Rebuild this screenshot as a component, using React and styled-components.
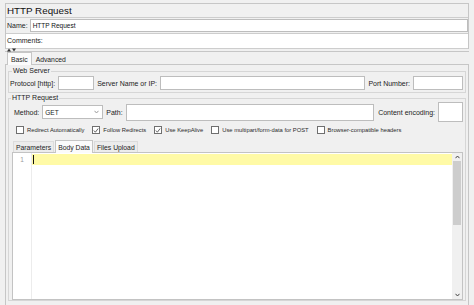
import React from "react";
import styled, { createGlobalStyle } from "styled-components";

const GlobalStyle = createGlobalStyle`
  html, body {
    margin: 0;
    padding: 0;
    background: #f0f0f0;
  }
  * {
    box-sizing: border-box;
  }
`;

const Page = styled.div`
  width: 474px;
  height: 305px;
  overflow: hidden;
  background: #f0f0f0;
  padding: 3px 5px 0 5px;
  font-family: "Liberation Sans", Arial, sans-serif;
  color: #1c1c1c;
`;

const TopPanel = styled.div`
  border: 1px solid #c6c6c6;
  border-bottom: none;
`;

const Title = styled.div`
  height: 14px;
  line-height: 13px;
  font-size: 9.8px;
  padding-left: 1px;
  color: #111;
  border-bottom: 1px solid #cdcdcd;
`;

const FieldRow = styled.div`
  display: flex;
  align-items: center;
  height: ${(p) => p.h || 15}px;
  gap: ${(p) => p.gap || 3}px;
`;

const Label = styled.span`
  font-size: ${(p) => p.size || 7}px;
  white-space: nowrap;
  padding-left: ${(p) => p.pl || 0}px;
`;

const TextInput = styled.div`
  height: ${(p) => p.h || 14}px;
  width: ${(p) => (p.w ? p.w + "px" : "auto")};
  flex: ${(p) => (p.w ? "none" : 1)};
  background: #fff;
  border: 1px solid #bdbdbd;
  font-size: 6.5px;
  line-height: ${(p) => (p.h || 14) - 2}px;
  padding-left: 2px;
  color: #111;
`;

const Comments = styled.div`
  height: 16px;
  background: #fff;
  border-top: 1px solid #cdcdcd;
  border-bottom: 1px solid #cdcdcd;
  font-size: 7px;
  line-height: 14px;
  padding-left: 1px;
`;

const Divider = styled.div`
  height: 4px;
  border-bottom: 1px solid #c6c6c6;
  display: flex;
  align-items: flex-start;
  gap: 1px;
  padding-left: 2px;
  margin-top: -1px;
`;

const TabStrip = styled.div`
  display: flex;
  align-items: flex-end;
  height: ${(p) => p.h || 13}px;
  padding-left: ${(p) => p.pl || 2}px;
  margin-top: ${(p) => p.mt || 0}px;
`;

const Tab = styled.div`
  font-size: 6.8px;
  padding: 0 ${(p) => p.px || 3}px;
  height: ${(p) => (p.active ? p.h + 2 : p.h)}px;
  line-height: ${(p) => (p.active ? p.h + 2 : p.h)}px;
  background: ${(p) => (p.active ? "#fbfbfb" : p.flat ? "transparent" : "#ececec")};
  border: 1px solid ${(p) => (p.active ? "#c6c6c6" : p.flat ? "transparent" : "#dcdcdc")};
  border-bottom: none;
  margin-right: 1px;
  margin-bottom: ${(p) => (p.active ? -1 : 0)}px;
  position: relative;
  white-space: nowrap;
`;

const TabPanel = styled.div`
  border: 1px solid #c6c6c6;
  height: 260px;
  padding: 2px 2px 0 2px;
`;

const Group = styled.fieldset`
  margin: ${(p) => p.mt || 0}px 0 0 0;
  padding: ${(p) => p.pad || "1px 2px 2px 1px"};
  min-width: 0;
  border: 1px solid #d6d6d6;
`;

const Legend = styled.legend`
  font-size: 7px;
  line-height: 8px;
  padding: 0 1px;
  margin-left: 2px;
  color: #1c1c1c;
`;

const MethodRow = styled(FieldRow)`
  padding: 0 2px 0 5px;
`;

const Select = styled.div`
  width: 61px;
  height: 14px;
  background: #fff;
  border: 1px solid #bdbdbd;
  display: flex;
  align-items: center;
  justify-content: space-between;
  padding: 0 3px 0 2px;
  font-size: 6.5px;
`;

const CheckRow = styled.div`
  display: flex;
  align-items: center;
  height: 10px;
  margin-top: 3px;
  padding-left: 7px;
  gap: 8px;
`;

const CheckItem = styled.div`
  display: flex;
  align-items: center;
  gap: 3px;
  font-size: 5.8px;
  color: #2a2a2a;
  white-space: nowrap;
`;

const Box = styled.span`
  width: 8px;
  height: 8px;
  border: 1px solid #6f6f6f;
  background: #fff;
  display: flex;
  align-items: center;
  justify-content: center;
`;

const Editor = styled.div`
  display: flex;
  height: 148px;
  margin: 0 2px 0 3px;
  border: 1px solid #c3c3c3;
  background: #fff;
`;

const Gutter = styled.div`
  width: 19px;
  border-right: 1px solid #ececec;
  font-size: 6.5px;
  color: #9a9a9a;
  text-align: center;
  padding-top: 2px;
  line-height: 10px;
`;

const Code = styled.div`
  flex: 1;
  padding-top: 1px;
`;

const CurrentLine = styled.div`
  height: 11px;
  background: #fffaa6;
  display: flex;
  align-items: center;
`;

const Caret = styled.span`
  width: 1px;
  height: 9px;
  margin-left: 1px;
  background: #111;
`;

const Scrollbar = styled.div`
  width: 10px;
  background: #f0f0f0;
  display: flex;
  flex-direction: column;
  align-items: stretch;
`;

const ScrollArrow = styled.div`
  height: 8px;
  display: flex;
  align-items: center;
  justify-content: center;
`;

const Thumb = styled.div`
  height: 64px;
  margin: 0 1px;
  background: #cdcdcd;
`;

const Track = styled.div`
  flex: 1;
`;

const Check = () => (
  <svg width="7" height="7" viewBox="0 0 7 7">
    <polyline points="1,3.5 2.8,5.5 6,1.2" fill="none" stroke="#333" strokeWidth="0.9" />
  </svg>
);

const Chevron = ({ up, color = "#555", w = 5 }) => (
  <svg width={w} height="4" viewBox="0 0 5 4">
    <polyline
      points={up ? "0.5,3.2 2.5,1 4.5,3.2" : "0.5,0.8 2.5,3 4.5,0.8"}
      fill="none"
      stroke={color}
      strokeWidth="1"
    />
  </svg>
);

const SplitArrows = () => (
  <>
    <svg width="4" height="4" viewBox="0 0 4 4">
      <polygon points="0,3.5 2,0.5 4,3.5" fill="#333" />
    </svg>
    <svg width="4" height="4" viewBox="0 0 4 4">
      <polygon points="0,0.5 2,3.5 4,0.5" fill="#333" />
    </svg>
  </>
);

const checks = [
  { label: "Redirect Automatically", on: false },
  { label: "Follow Redirects", on: true },
  { label: "Use KeepAlive", on: true },
  { label: "Use multipart/form-data for POST", on: false },
  { label: "Browser-compatible headers", on: false },
];

export default function App() {
  return (
    <Page>
      <GlobalStyle />
      <TopPanel>
        <Title>HTTP Request</Title>
        <FieldRow h={15} gap={2}>
          <Label pl={1}>Name:</Label>
          <TextInput h={13}>HTTP Request</TextInput>
        </FieldRow>
        <Comments>Comments:</Comments>
      </TopPanel>
      <Divider>
        <SplitArrows />
      </Divider>
      <TabStrip h={12} pl={2}>
        <Tab active h={11}>Basic</Tab>
        <Tab flat h={11} px={2}>Advanced</Tab>
      </TabStrip>
      <TabPanel>
        <Group>
          <Legend>Web Server</Legend>
          <FieldRow h={14} gap={3}>
            <Label>Protocol [http]:</Label>
            <TextInput w={36} />
            <Label>Server Name or IP:</Label>
            <TextInput />
            <Label>Port Number:</Label>
            <TextInput w={50} />
          </FieldRow>
        </Group>
        <Group mt={1} pad="0">
          <Legend>HTTP Request</Legend>
          <MethodRow h={20} gap={3}>
            <Label>Method:</Label>
            <Select>
              GET
              <Chevron color="#9a9a9a" />
            </Select>
            <Label>Path:</Label>
            <TextInput h={17} />
            <Label pl={1}>Content encoding:</Label>
            <TextInput w={25} h={20} />
          </MethodRow>
          <CheckRow>
            {checks.map((c) => (
              <CheckItem key={c.label}>
                <Box>{c.on && <Check />}</Box>
                {c.label}
              </CheckItem>
            ))}
          </CheckRow>
          <TabStrip h={13} pl={4} mt={4}>
            <Tab h={11} px={2}>Parameters</Tab>
            <Tab active h={11} px={2}>Body Data</Tab>
            <Tab h={11} px={2}>Files Upload</Tab>
          </TabStrip>
          <Editor>
            <Gutter>1</Gutter>
            <Code>
              <CurrentLine>
                <Caret />
              </CurrentLine>
            </Code>
            <Scrollbar>
              <ScrollArrow>
                <Chevron up color="#444" />
              </ScrollArrow>
              <Thumb />
              <Track />
              <ScrollArrow>
                <Chevron color="#444" />
              </ScrollArrow>
            </Scrollbar>
          </Editor>
        </Group>
      </TabPanel>
    </Page>
  );
}
